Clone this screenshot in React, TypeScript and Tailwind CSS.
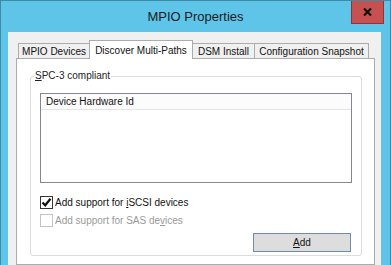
import React from 'react';

function Tab({ label, active, cls }: { label: string; active?: boolean; cls: string }) {
  return (
    <div
      className={`flex items-center justify-center text-[10px] border-[#acacac] ${
        active ? 'h-[19px] -mb-px bg-white border-l border-t border-r relative z-10' : 'h-[15px] bg-[#f0f0f0] border-t'
      } ${cls}`}
    >
      {label}
    </div>
  );
}

function Check({ checked, disabled, children }: { checked?: boolean; disabled?: boolean; children: React.ReactNode }) {
  return (
    <div className={`flex items-center h-[13px] gap-[2px] text-[10px] ${disabled ? 'text-[#9a9a9a]' : 'text-[#111]'}`}>
      <span
        className={`w-[13px] h-[13px] flex items-center justify-center bg-white border ${
          disabled ? 'border-[#c4c4c4]' : 'border-[#333]'
        }`}
      >
        {checked && (
          <svg width="11" height="11" viewBox="0 0 11 11">
            <path d="M1.5 5.5 L4.2 8.3 L9.5 1.8" fill="none" stroke="#111" strokeWidth="2.2" />
          </svg>
        )}
      </span>
      <span>{children}</span>
    </div>
  );
}

export default function App() {
  return (
    <div className="w-[391px] h-[265px] overflow-hidden bg-white font-['Liberation_Sans',Arial,sans-serif] text-[#111]">
      <div className="relative h-full flex flex-col bg-[#5ec5e9] border-x border-t border-[#3f88a6]">
        {/* Title bar */}
        <div className="h-[31px] shrink-0 flex items-center justify-center text-[13px] text-[#1b1b1b]">
          MPIO Properties
        </div>
        <div className="absolute top-0 right-[6px] w-[33px] h-[23px] bg-[#c75050] border border-t-0 border-[#8f3535] flex items-center justify-center">
          <svg width="9" height="8" viewBox="0 0 9 8">
            <path d="M1 0.5 L8 7.5 M8 0.5 L1 7.5" stroke="#111" strokeWidth="2.2" />
          </svg>
        </div>

        {/* Client area */}
        <div className="flex-1 ml-[7px] mr-[9px] bg-[#f0f0f0] pt-[8px] pl-[8px] pr-[6px] flex flex-col">
          <div className="h-[18px] flex items-end shrink-0">
            <Tab label="MPIO Devices" cls="ml-[2px] w-[71px] border-l" />
            <Tab label="Discover Multi-Paths" active cls="w-[104px]" />
            <Tab label="DSM Install" cls="w-[62px] border-r" />
            <Tab label="Configuration Snapshot" cls="w-[114px] border-r" />
          </div>

          <div className="flex-1 bg-white border border-[#acacac] pt-[11px] pl-[13px] pr-[12px]">
            <fieldset className="border border-[#dcdcdc] rounded-[3px]">
              <legend className="ml-[3px] px-[1px] text-[10px] leading-[12px] text-[#222]">
                <span className="underline">S</span>PC-3 compliant
              </legend>
              <div className="px-[9px] pb-[3px]">
                <div className="mt-[11px] h-[90px] border border-[#828790] bg-white">
                  <div className="h-[16px] flex items-center pl-[5px] text-[10px] bg-[#fcfcfc] border-b border-[#e5e5e5]">
                    Device Hardware Id
                  </div>
                </div>
                <div className="mt-[13px] flex flex-col gap-[5px]">
                  <Check checked>
                    Add support for <span className="underline">i</span>SCSI devices
                  </Check>
                  <Check disabled>
                    Add support for SAS de<span className="underline">v</span>ices
                  </Check>
                </div>
                <div className="mt-[6px] flex justify-end pr-[1px]">
                  <div className="w-[98px] h-[19px] bg-[#dddddd] border border-[#6f8cab] flex items-center justify-center text-[10px]">
                    <span className="underline">A</span>dd
                  </div>
                </div>
              </div>
            </fieldset>
          </div>
        </div>
      </div>
    </div>
  );
}
